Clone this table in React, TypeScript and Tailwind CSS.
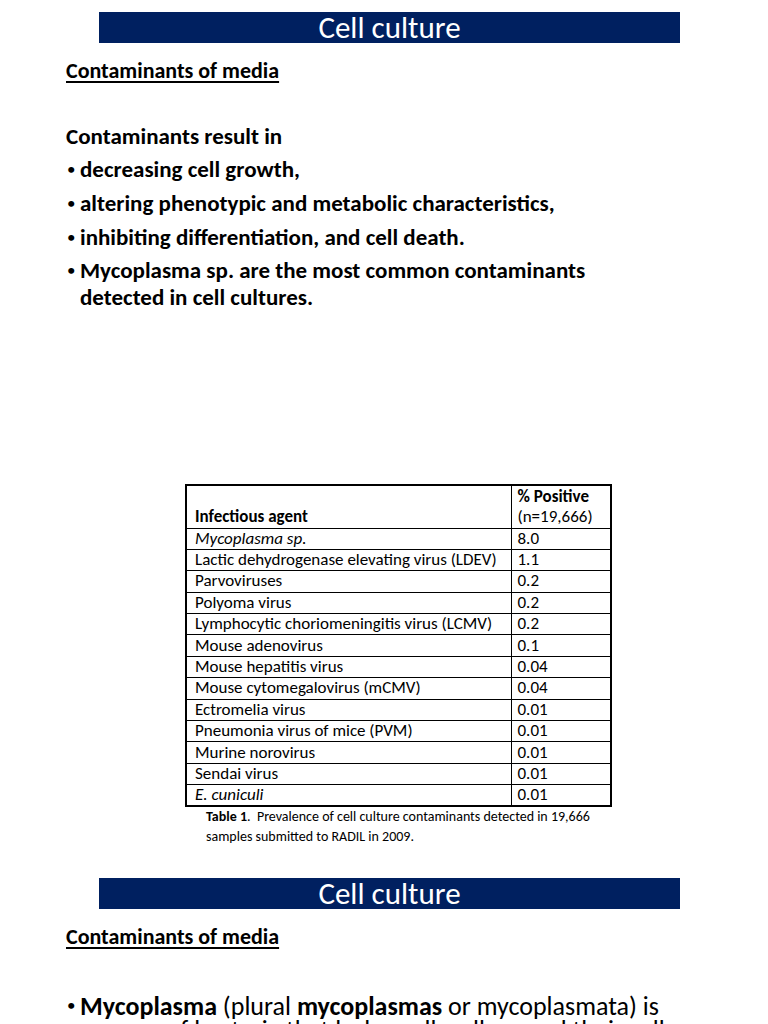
import React from "react";

const font = { fontFamily: "Carlito, Calibri, 'Open Sans', 'Noto Sans', sans-serif" };

const rows: { name: string; val: string; italic?: boolean }[] = [
  { name: "Mycoplasma sp.", val: "8.0", italic: true },
  { name: "Lactic dehydrogenase elevating virus (LDEV)", val: "1.1" },
  { name: "Parvoviruses", val: "0.2" },
  { name: "Polyoma virus", val: "0.2" },
  { name: "Lymphocytic choriomeningitis virus (LCMV)", val: "0.2" },
  { name: "Mouse adenovirus", val: "0.1" },
  { name: "Mouse hepatitis virus", val: "0.04" },
  { name: "Mouse cytomegalovirus (mCMV)", val: "0.04" },
  { name: "Ectromelia virus", val: "0.01" },
  { name: "Pneumonia virus of mice (PVM)", val: "0.01" },
  { name: "Murine norovirus", val: "0.01" },
  { name: "Sendai virus", val: "0.01" },
  { name: "E. cuniculi", val: "0.01", italic: true },
];

function TitleBar() {
  return (
    <div className="mx-[99px] w-[581px] h-[31px] bg-[#002060] flex items-center justify-center">
      <span className="text-white text-[31px] leading-none">Cell culture</span>
    </div>
  );
}

function Bullet({ children }: { children: React.ReactNode }) {
  return (
    <div className="flex">
      <span className="w-[14px] shrink-0 font-normal text-[17px] pl-[1px]">•</span>
      <span>{children}</span>
    </div>
  );
}

export default function App() {
  return (
    <div className="w-[768px] h-[1024px] overflow-hidden bg-white text-black" style={font}>
      {/* Slide 1 */}
      <div className="pt-[12px] h-[866px]">
        <TitleBar />
        <div className="pl-[66px] mt-[16px] text-[22px] font-bold leading-[24px]">
          <span className="underline underline-offset-[3px] decoration-[1.5px]">Contaminants of media</span>
        </div>
        <div className="pl-[66px] mt-[40px] text-[23px] font-bold leading-[27px]">
          <div>Contaminants result in</div>
          <div className="mt-[6px]"><Bullet>decreasing cell growth,</Bullet></div>
          <div className="mt-[7px]"><Bullet>altering phenotypic and metabolic characteristics,</Bullet></div>
          <div className="mt-[7px]"><Bullet>inhibiting differentiation, and cell death.</Bullet></div>
          <div className="mt-[6px]">
            <Bullet>
              Mycoplasma sp. are the most common contaminants
              <br />
              detected in cell cultures.
            </Bullet>
          </div>
        </div>

        <div className="ml-[185px] mt-[173px] w-[427px]">
          <table className="w-full border-collapse border-2 border-black text-[17px] leading-[20px]">
            <thead>
              <tr className="h-[43px]">
                <th className="border border-black text-left align-bottom font-bold px-[8px] pb-[1px]">Infectious agent</th>
                <th className="border border-black text-left align-bottom px-[6px] w-[100px] pb-[1px]">
                  <div className="font-bold">% Positive</div>
                  <div className="font-normal">(n=19,666)</div>
                </th>
              </tr>
            </thead>
            <tbody>
              {rows.map((r) => (
                <tr key={r.name} className="h-[21.4px]">
                  <td className={"border border-black px-[8px] py-0 " + (r.italic ? "italic" : "")}>{r.name}</td>
                  <td className="border border-black px-[6px] py-0">{r.val}</td>
                </tr>
              ))}
            </tbody>
          </table>
          <div className="pl-[21px] pt-[0px] text-[14px] leading-[20px]">
            <span className="font-bold">Table 1</span>.&nbsp; Prevalence of cell culture contaminants detected in 19,666
            <br />
            samples submitted to RADIL in 2009.
          </div>
        </div>
      </div>

      {/* Slide 2 */}
      <div className="pt-[12px]">
        <TitleBar />
        <div className="pl-[66px] mt-[16px] text-[22px] font-bold leading-[24px]">
          <span className="underline underline-offset-[3px] decoration-[1.5px]">Contaminants of media</span>
        </div>
        <div className="pl-[66px] mt-[45px] text-[26px] leading-[24px]">
          <Bullet>
            <span className="font-bold">Mycoplasma</span> (plural <span className="font-bold">mycoplasmas</span> or mycoplasmata) is
            <br />
            a genus of bacteria that lack a cell wall around their cell
          </Bullet>
        </div>
      </div>
    </div>
  );
}
